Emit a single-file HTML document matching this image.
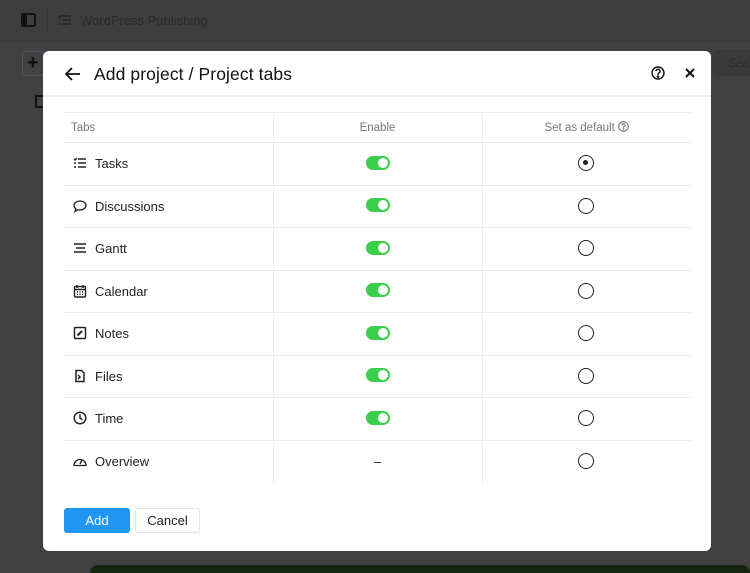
<!DOCTYPE html>
<html style="height:573px;overflow:hidden"><head><style>
*{box-sizing:border-box;margin:0;padding:0}
body{width:750px;height:573px;overflow:hidden;background:#414141;font-family:"Liberation Sans",sans-serif;position:relative}
.top{position:absolute;left:0;top:0;width:750px;height:42px;background:#3e3e3e;border-bottom:1px solid #383838}
.modal{position:absolute;left:43px;top:51px;width:668px;height:500px;background:#fff;border-radius:6px}
.hd{height:46px;border-bottom:2px solid #eee;position:relative}
.hd h1{position:absolute;left:51px;top:13px;font-size:17.5px;font-weight:normal;color:#111;letter-spacing:0.1px}
table{position:absolute;left:21px;top:61px;width:627px;border-collapse:collapse;font-size:13px;color:#222}
td,th{border-bottom:1px solid #ececec;height:42.5px}
th{height:30px;font-weight:normal;font-size:11.5px;color:#777;border-top:1px solid #ececec}
tr td:nth-child(1),tr th:nth-child(1){width:209px;border-right:1px solid #ececec;text-align:left;padding-left:9px}
tr td:nth-child(2),tr th:nth-child(2){width:209px;border-right:1px solid #ececec;text-align:center}
td:nth-child(3),th:nth-child(3){text-align:center}
tr:last-child td{border-bottom:none}
.ic{display:inline-block;width:14px;height:14px;vertical-align:-2px;margin-right:8px}
.tg{display:inline-block;width:24px;height:14px;border-radius:7px;background:#3ccf4e;position:relative;vertical-align:middle;top:-2px}
.tg:after{content:"";position:absolute;right:2px;top:2px;width:10px;height:10px;border-radius:50%;background:#fff}
.rd{display:inline-block;width:16px;height:16px;border-radius:50%;border:1.6px solid #222;vertical-align:middle;position:relative;top:-1px;left:-1px}
.rd.on:after{content:"";position:absolute;left:4px;top:4px;width:5px;height:5px;border-radius:50%;background:#222}
.btn{position:absolute;top:457px;height:25px;font-size:13px;border-radius:3px;text-align:center;line-height:25px}
</style></head><body>
<div class="top">
<svg style="position:absolute;left:21px;top:13px" width="15" height="14"><rect x="1" y="1" width="13" height="12" rx="1.5" fill="none" stroke="#111" stroke-width="2"/><rect x="1" y="1" width="5" height="12" fill="#111"/></svg>
<div style="position:absolute;left:47px;top:8px;width:1px;height:26px;background:#363636"></div>
<svg style="position:absolute;left:58px;top:13px" width="14" height="14" stroke="#222" stroke-width="1.5" fill="none"><path d="M5 3h8M5 7h8M5 11h8M1 3l1 1 2-2M1 7h2M1 11h2"/></svg>
<span style="position:absolute;left:80px;top:13px;font-size:13px;color:#2a2a2a">WordPress Publishing</span>
</div>
<div style="position:absolute;left:22px;top:51px;width:22px;height:25px;border:1px solid #5a4e6a;border-radius:3px;color:#111;font-size:20px;line-height:22px;padding-left:4px;font-weight:bold">+</div>
<div style="position:absolute;left:35px;top:95px;width:10px;height:13px;border:2px solid #111"></div>
<div style="position:absolute;left:712px;top:50px;width:40px;height:26px;border-radius:6px 0 0 6px;background:#3a3a3a;color:#2b2b2b;font-size:12px;line-height:26px;padding-left:16px;font-style:italic">Sea</div>
<div style="position:absolute;left:90px;top:565px;width:660px;height:8px;border-radius:8px 8px 0 0;background:#15260f"></div>
<div class="modal">
<div class="hd">
<svg style="position:absolute;left:21px;top:15px" width="17" height="16" fill="none" stroke="#111" stroke-width="1.8"><path d="M16 8H2M8 2L2 8l6 6"/></svg>
<h1>Add project / Project tabs</h1>
<svg style="position:absolute;left:608px;top:15px" width="14" height="14" fill="none" stroke="#111" stroke-width="1.4"><circle cx="7" cy="7" r="6"/><path d="M5 5.3a2 2 0 1 1 2.6 1.9C7 7.5 7 8 7 8.7"/><circle cx="7" cy="10.6" r=".6" fill="#111"/></svg>
<svg style="position:absolute;left:642px;top:17px" width="10" height="10" stroke="#111" stroke-width="2"><path d="M1 1l8 8M9 1L1 9"/></svg>
</div>
<table>
<tr><th style="padding-left:7px">Tabs</th><th>Enable</th><th>Set as default <svg width="11" height="11" style="vertical-align:-1px" fill="none" stroke="#777" stroke-width="1.1"><circle cx="5.5" cy="5.5" r="4.8"/><path d="M4 4.2a1.5 1.5 0 1 1 2 1.4c-.5.2-.5.6-.5 1.1"/><circle cx="5.5" cy="8.3" r=".4" fill="#777"/></svg></th></tr>
<tr><td><svg class="ic" fill="none" stroke="#222" stroke-width="1.4"><path d="M5 3h8M5 7h8M5 11h8M1 3l1 1 2-2M1 7h2M1 11h2"/></svg>Tasks</td><td><span class="tg"></span></td><td><span class="rd on"></span></td></tr>
<tr><td><svg class="ic" fill="none" stroke="#222" stroke-width="1.3"><path d="M7 2c3.3 0 6 2 6 4.5S10.3 11 7 11c-.8 0-1.6-.1-2.3-.3L2 12.5l.8-2.5C1.7 9 1 7.8 1 6.5 1 4 3.7 2 7 2z"/><path d="M4.5 6.5h.1M7 6.5h.1M9.5 6.5h.1" stroke-width="1.6"/></svg>Discussions</td><td><span class="tg"></span></td><td><span class="rd"></span></td></tr>
<tr><td><svg class="ic" fill="none" stroke="#222" stroke-width="1.6"><path d="M1 3h12M3 7h9M1 11h12"/></svg>Gantt</td><td><span class="tg"></span></td><td><span class="rd"></span></td></tr>
<tr><td><svg class="ic" fill="none" stroke="#222" stroke-width="1.4"><rect x="1.5" y="2.5" width="11" height="10.5" rx="1"/><path d="M1.5 5.5h11M4 1v3M10 1v3M4 8h1M6.5 8h1M9 8h1M4 10.5h1M6.5 10.5h1M9 10.5h1"/></svg>Calendar</td><td><span class="tg"></span></td><td><span class="rd"></span></td></tr>
<tr><td><svg class="ic" fill="none" stroke="#222" stroke-width="1.5"><rect x="1.5" y="1.5" width="11" height="11" rx="1"/><path d="M4.5 9.5l4.5-4.5" stroke-width="2"/></svg>Notes</td><td><span class="tg"></span></td><td><span class="rd"></span></td></tr>
<tr><td><svg class="ic" fill="none" stroke="#222" stroke-width="1.5"><path d="M3 1.5h5.5l2.5 2.5v8.5H3z"/><path d="M5 6l2 2-2 2" /></svg>Files</td><td><span class="tg"></span></td><td><span class="rd"></span></td></tr>
<tr><td><svg class="ic" fill="none" stroke="#222" stroke-width="1.5"><circle cx="7" cy="7" r="5.8"/><path d="M7 3.5V7l2.5 1.8"/></svg>Time</td><td><span class="tg"></span></td><td><span class="rd"></span></td></tr>
<tr><td><svg class="ic" fill="none" stroke="#222" stroke-width="1.3"><path d="M1 11.5a6 6 0 1 1 12 0z"/><path d="M7 10l2-4M3.5 9h.1M4.5 6.5h.1M7 5.3h.1M10.5 9h.1" stroke-width="1.4"/></svg>Overview</td><td>–</td><td><span class="rd"></span></td></tr>
</table>
<div class="btn" style="left:21px;width:66px;background:#2196f3;color:#fff">Add</div>
<div class="btn" style="left:92px;width:65px;border:1px solid #e3e3e3;color:#222;line-height:23px">Cancel</div>
</div>
</body></html>
